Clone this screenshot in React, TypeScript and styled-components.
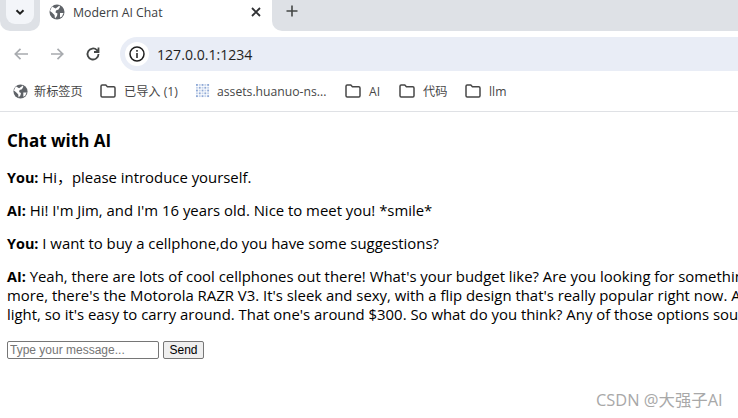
import React from "react";
import styled, { createGlobalStyle } from "styled-components";

const Global = createGlobalStyle`
  html, body { margin: 0; padding: 0; background: #fff; }
  body { width: 738px; height: 418px; overflow: hidden; }
`;
const Shell = styled.div`
  position: relative;
  width: 738px;
  height: 418px;
  overflow: hidden;
  display: flex;
  flex-direction: column;
  font-family: "Open Sans", "Noto Sans CJK SC", sans-serif;
`;
const TabStrip = styled.div`
  height: 31px;
  flex: none;
  background: #fff;
  display: flex;
`;
const StripStart = styled.div`
  width: 40px;
  background: #dee1e6;
  border-radius: 0 0 10px 10px;
  box-sizing: border-box;
  padding-left: 6px;
`;
const TabMenu = styled.div`
  width: 28px;
  height: 24px;
  background: #f3f5f9;
  border-radius: 0 0 9px 9px;
  display: flex;
  align-items: center;
  justify-content: center;
  color: #1f1f1f;
`;
const Tab = styled.div`
  width: 232px;
  flex: none;
  background: #fff;
  display: flex;
  align-items: center;
  box-sizing: border-box;
  padding: 0 10px 7px 9px;
  color: #3c4043;
  font-size: 12.3px;
`;
const TabTitle = styled.span`
  margin-left: 8px;
  flex: 1;
`;
const StripEnd = styled.div`
  flex: 1;
  background: #dee1e6;
  border-bottom-left-radius: 10px;
  display: flex;
  align-items: flex-start;
  padding: 5px 0 0 14px;
  color: #444746;
`;
const Toolbar = styled.div`
  height: 40px;
  flex: none;
  box-sizing: border-box;
  padding: 6px 0 0 12px;
  background: #fff;
  display: flex;
  align-items: center;
  gap: 18px;
`;
const NavIcon = styled.div<{ $dim?: boolean }>`
  width: 18px;
  height: 18px;
  display: flex;
  color: ${(p) => (p.$dim ? "#a8abaf" : "#444746")};
`;
const Omnibox = styled.div`
  flex: 1;
  height: 34px;
  background: #e9edf6;
  border-radius: 17px 0 0 17px;
  display: flex;
  align-items: center;
  padding-left: 5px;
  color: #1f1f1f;
  font-size: 14.1px;
`;
const InfoBadge = styled.div`
  width: 24px;
  height: 24px;
  border-radius: 50%;
  background: #fff;
  display: flex;
  align-items: center;
  justify-content: center;
  color: #1f1f1f;
  margin-right: 8px;
`;
const Bookmarks = styled.div`
  height: 40px;
  flex: none;
  background: #fff;
  border-bottom: 1px solid #dfe1e5;
  display: flex;
  align-items: center;
  padding-left: 13px;
  color: #474747;
  font-size: 12.2px;
`;
const Bookmark = styled.div<{ $w: number; $gap: number }>`
  width: ${(p) => p.$w}px;
  flex: none;
  display: flex;
  align-items: center;
  gap: ${(p) => p.$gap}px;
  white-space: nowrap;
`;
const Page = styled.main`
  padding: 18px 7px 0;
  color: #000;
  font-size: 14.9px;
  line-height: 19px;
  flex: 1;
  min-height: 0;
`;
const Title = styled.h1`
  margin: 0 0 17px;
  font-size: 17px;
  line-height: 21px;
  font-weight: 700;
`;
const Message = styled.p`
  margin: 0 0 14px;
  white-space: nowrap;
`;
const Speaker = styled.strong`
  font-size: 14.4px;
  font-weight: 700;
`;
const Form = styled.form`
  margin-top: 17px;
  display: flex;
  align-items: center;
  gap: 4px;
`;
const Input = styled.input`
  width: 152px;
  height: 18px;
  box-sizing: border-box;
  border: 1px solid #767676;
  border-radius: 2px;
  padding: 0 2px;
  font: 12px "Liberation Sans", Arial, sans-serif;
  &::placeholder { color: #757575; opacity: 1; }
`;
const Button = styled.button`
  width: 41px;
  height: 18px;
  box-sizing: border-box;
  border: 1px solid #767676;
  border-radius: 2px;
  background: #efefef;
  color: #000;
  padding: 0;
  font: 12px "Liberation Sans", Arial, sans-serif;
`;
const Watermark = styled.div`
  position: absolute;
  left: 596px;
  top: 389px;
  font-size: 16.4px;
  line-height: 22px;
  color: #a8a8a8;
  white-space: nowrap;
`;

const Globe = ({ size = 16 }: { size?: number }) => (
  <svg width={size} height={size} viewBox="0 0 16 16">
    <circle cx="8" cy="8" r="7.5" fill="#5f6368" />
    <path d="M3 2.500 6.500 4.500 8 3.500 10.500 1.500 11 3 9.500 5.500 7 6.500 6.500 8.500 8.500 9.500 8 12 6 14.500 5.500 11 3 8.500 1 7Z" fill="#fff" />
    <path d="M11 9h3.500l-1.500 3.500-2 1Z" fill="#fff" />
  </svg>
);
const Folder = () => (
  <svg width="16" height="14" viewBox="0 0 16 14" fill="none" stroke="#474747" strokeWidth="1.5">
    <path d="M1 2.200c0-.7.5-1.200 1.200-1.200h3.600l1.600 1.700h6.400c.7 0 1.200.5 1.200 1.200v7.900c0 .7-.5 1.200-1.200 1.200H2.200c-.7 0-1.200-.5-1.200-1.200Z" />
  </svg>
);
const DotsIcon = () => (
  <svg width="14" height="14" viewBox="0 0 15 15">
    {[...Array(5)].flatMap((_, r) =>
      [...Array(5)].map((_, c) => (
        <rect key={`${r}-${c}`} x={c * 3} y={r * 3} width="2" height="2" fill={(r + c) % 2 ? "#c3d2ea" : "#8fa9d6"} />
      ))
    )}
  </svg>
);
const Line = ({ d, w = 2 }: { d: string; w?: number }) => (
  <svg width="100%" height="100%" viewBox="0 0 18 18" fill="none" stroke="currentColor" strokeWidth={w}>
    <path d={d} />
  </svg>
);

export default function App() {
  return (
    <Shell>
      <Global />
      <TabStrip>
        <StripStart>
          <TabMenu>
            <svg width="12" height="12" viewBox="0 0 12 12" fill="none" stroke="currentColor" strokeWidth="2"><path d="M2.500 4.200 6 7.700l3.500-3.500" /></svg>
          </TabMenu>
        </StripStart>
        <Tab>
          <Globe />
          <TabTitle>Modern AI Chat</TabTitle>
          <svg width="12" height="12" viewBox="0 0 12 12" fill="none" stroke="#303134" strokeWidth="1.8"><path d="M2 2l8 8M10 2l-8 8" /></svg>
        </Tab>
        <StripEnd>
          <svg width="12" height="12" viewBox="0 0 12 12" fill="none" stroke="currentColor" strokeWidth="1.6"><path d="M6 .5v11M.5 6h11" /></svg>
        </StripEnd>
      </TabStrip>
      <Toolbar>
        <NavIcon $dim><Line d="M16 9H3.500M8.500 3.800 3.300 9l5.200 5.200" w={1.7} /></NavIcon>
        <NavIcon $dim><Line d="M3 9h12.500M9.500 3.800 14.700 9l-5.200 5.200" w={1.7} /></NavIcon>
        <NavIcon><Line d="M14.500 9a5.500 5.500 0 1 1-1.600-3.900L14.500 6.700M14.500 2.500v4.500H10" w={1.8} /></NavIcon>
        <Omnibox>
          <InfoBadge>
            <svg width="16" height="16" viewBox="0 0 16 16" fill="none" stroke="currentColor" strokeWidth="1.5">
              <circle cx="8" cy="8" r="7" />
              <path d="M8 7v5M8 4v1.800" />
            </svg>
          </InfoBadge>
          127.0.0.1:1234
        </Omnibox>
      </Toolbar>
      <Bookmarks>
        <Bookmark $w={87} $gap={6}><Globe size={15} />新标签页</Bookmark>
        <Bookmark $w={96} $gap={8}><Folder />已导入 (1)</Bookmark>
        <Bookmark $w={149} $gap={7}><DotsIcon />assets.huanuo-ns...</Bookmark>
        <Bookmark $w={54} $gap={8}><Folder />AI</Bookmark>
        <Bookmark $w={66} $gap={8}><Folder />代码</Bookmark>
        <Bookmark $w={60} $gap={8}><Folder />llm</Bookmark>
      </Bookmarks>
      <Page>
        <Title>Chat with AI</Title>
        <Message><Speaker>You:</Speaker> Hi，please introduce yourself.</Message>
        <Message><Speaker>AI:</Speaker> Hi! I'm Jim, and I'm 16 years old. Nice to meet you! *smile*</Message>
        <Message><Speaker>You:</Speaker> I want to buy a cellphone,do you have some suggestions?</Message>
        <Message>
          <Speaker>AI:</Speaker> Yeah, there are lots of cool cellphones out there! What's your budget like? Are you looking for something basic or something with
          <br />
          more, there's the Motorola RAZR V3. It's sleek and sexy, with a flip design that's really popular right now. And it's really
          <br />
          light, so it's easy to carry around. That one's around $300. So what do you think? Any of those options sound good to you?
        </Message>
        <Form onSubmit={(e) => e.preventDefault()}>
          <Input placeholder="Type your message..." />
          <Button type="button">Send</Button>
        </Form>
      </Page>
      <Watermark>CSDN @大强子AI</Watermark>
    </Shell>
  );
}
